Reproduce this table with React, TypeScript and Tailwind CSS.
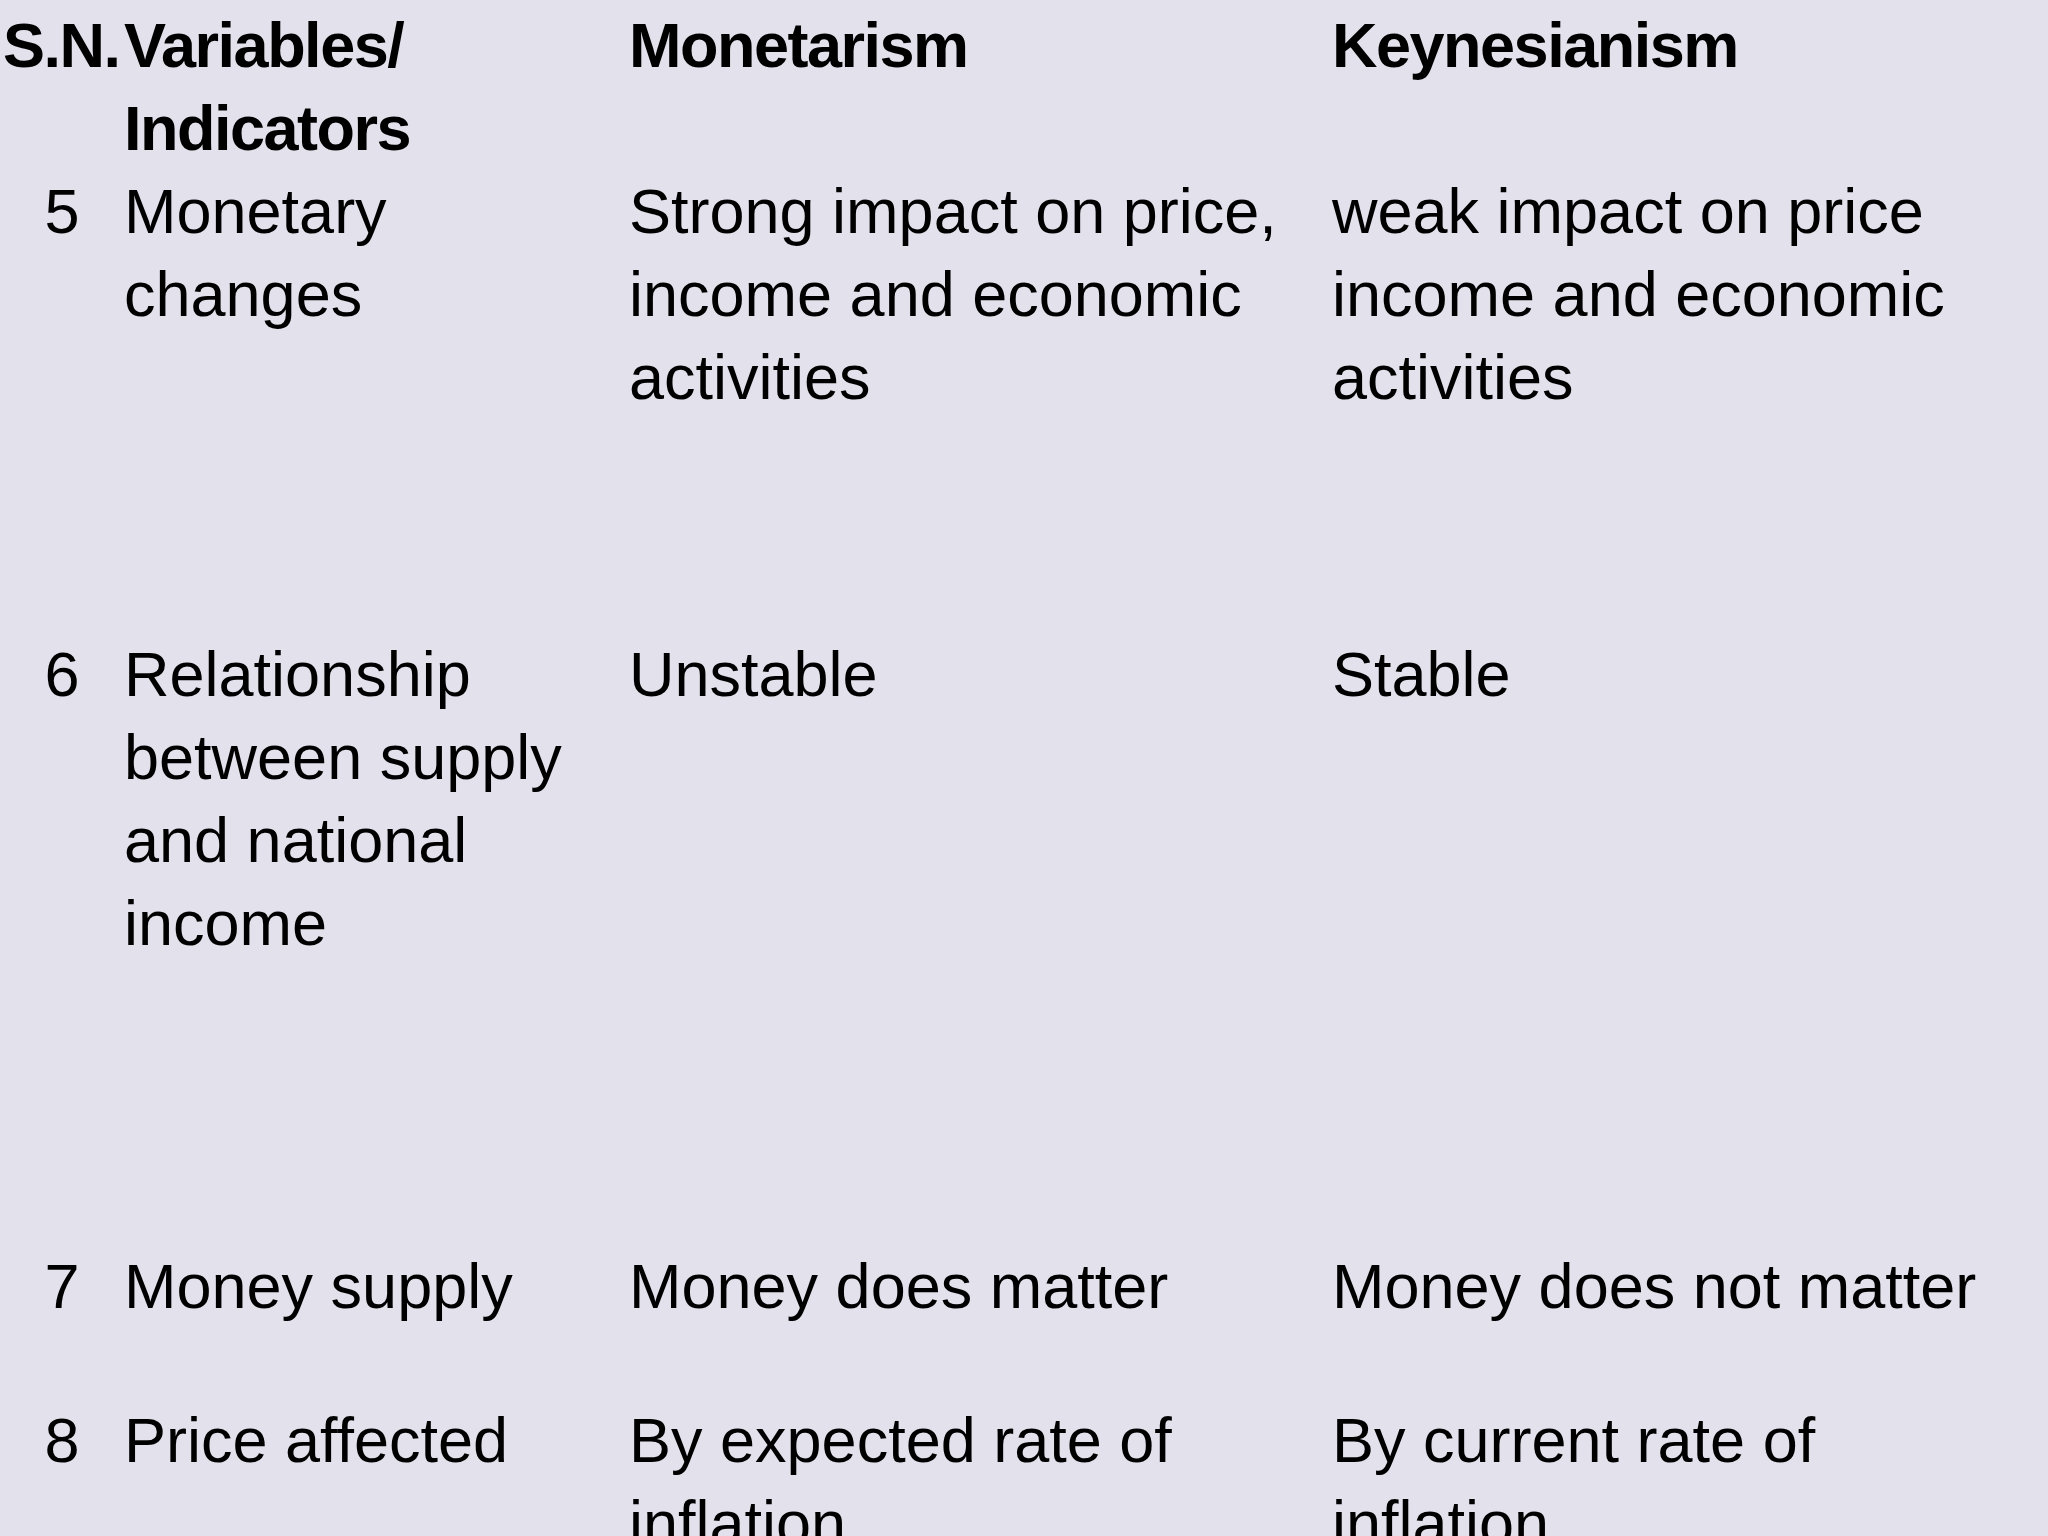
import React from "react";

type Row = {
  n?: string;
  head?: boolean;
  h: string;
  c1: string[];
  c2: string[];
  c3: string[];
};

const rows: Row[] = [
  { head: true, h: "h-[166px]", c1: ["Variables/", "Indicators"], c2: ["Monetarism"], c3: ["Keynesianism"] },
  {
    n: "5",
    h: "h-[463px]",
    c1: ["Monetary", "changes"],
    c2: ["Strong impact on price,", "income and economic", "activities"],
    c3: ["weak impact on price", "income and economic", "activities"],
  },
  {
    n: "6",
    h: "h-[612px]",
    c1: ["Relationship", "between supply", "and national", "income"],
    c2: ["Unstable"],
    c3: ["Stable"],
  },
  { n: "7", h: "h-[154px]", c1: ["Money supply"], c2: ["Money does matter"], c3: ["Money does not matter"] },
  {
    n: "8",
    h: "h-[260px]",
    c1: ["Price affected"],
    c2: ["By expected rate of", "inflation"],
    c3: ["By current rate of", "inflation"],
  },
];

function Lines({ items }: { items: string[] }) {
  return (
    <>
      {items.map((t, i) => (
        <div key={i} className="whitespace-nowrap">
          {t}
        </div>
      ))}
    </>
  );
}

export default function App() {
  return (
    <div
      className="w-[2048px] h-[1536px] overflow-hidden bg-[#e3e2ec] text-black"
      style={{ fontFamily: '"Liberation Sans", Arial, sans-serif' }}
    >
      <div className="flex flex-col text-[63px] leading-[83px]">
        {rows.map((r, i) => (
          <div
            key={i}
            className={`grid grid-cols-[124px_505px_703px_1fr] shrink-0 pt-[4px] ${r.h} ${
              r.head ? "font-bold tracking-[-1.5px]" : ""
            }`}
          >
            {r.head ? (
              <div className="pl-[3px] whitespace-nowrap">S.N.</div>
            ) : (
              <div className="text-center">{r.n}</div>
            )}
            <div>
              <Lines items={r.c1} />
            </div>
            <div>
              <Lines items={r.c2} />
            </div>
            <div>
              <Lines items={r.c3} />
            </div>
          </div>
        ))}
      </div>
    </div>
  );
}
